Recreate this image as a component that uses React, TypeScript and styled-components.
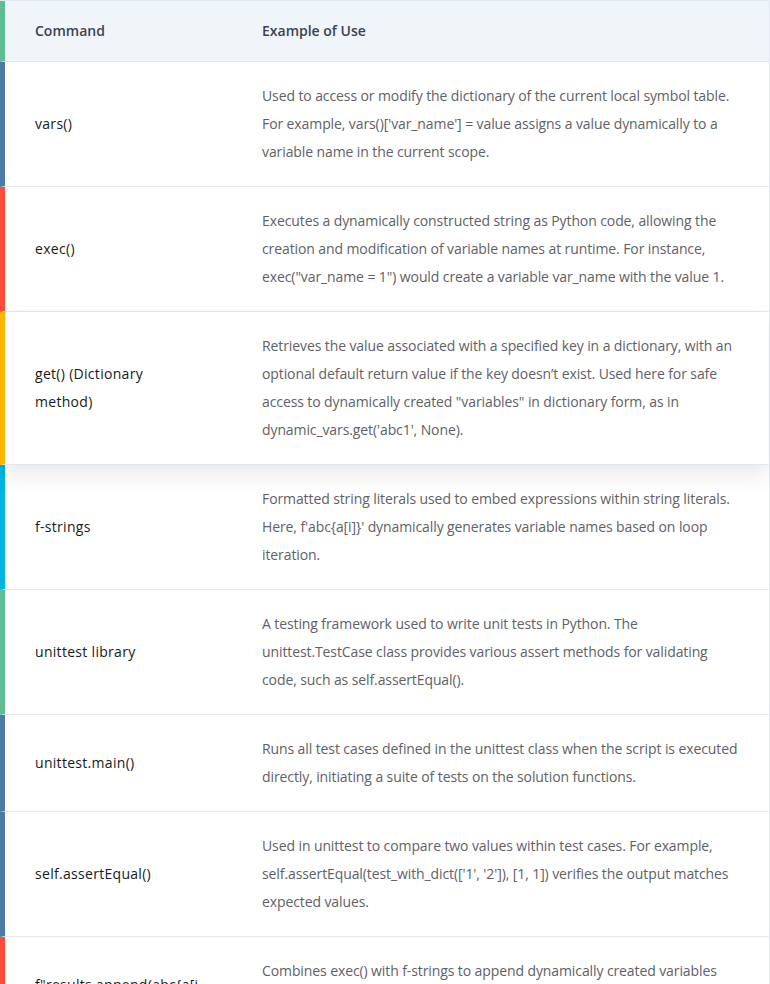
import React from "react";
import styled, { createGlobalStyle } from "styled-components";

const GlobalStyle = createGlobalStyle`
  html, body {
    margin: 0;
    padding: 0;
    background: #fff;
  }
  body {
    font-family: "Open Sans", Lato, sans-serif;
    -webkit-font-smoothing: antialiased;
  }
`;

type Row = {
  command: string;
  usage: string;
  accent: string;
  raised?: boolean;
};

const rows: Row[] = [
  {
    command: "vars()",
    usage:
      "Used to access or modify the dictionary of the current local symbol table. For example, vars()['var_name'] = value assigns a value dynamically to a variable name in the current scope.",
    accent: "#4a7aa5",
  },
  {
    command: "exec()",
    usage:
      'Executes a dynamically constructed string as Python code, allowing the creation and modification of variable names at runtime. For instance, exec("var_name = 1") would create a variable var_name with the value 1.',
    accent: "#ff4c3b",
  },
  {
    command: "get() (Dictionary method)",
    usage:
      "Retrieves the value associated with a specified key in a dictionary, with an optional default return value if the key doesn\u2019t exist. Used here for safe access to dynamically created \"variables\" in dictionary form, as in dynamic_vars.get('abc1', None).",
    accent: "#ffb500",
    raised: true,
  },
  {
    command: "f-strings",
    usage:
      "Formatted string literals used to embed expressions within string literals. Here, f'abc{a[i]}' dynamically generates variable names based on loop iteration.",
    accent: "#00b3e0",
  },
  {
    command: "unittest library",
    usage:
      "A testing framework used to write unit tests in Python. The unittest.TestCase class provides various assert methods for validating code, such as self.assertEqual().",
    accent: "#5fbd96",
  },
  {
    command: "unittest.main()",
    usage:
      "Runs all test cases defined in the unittest class when the script is executed directly, initiating a suite of tests on the solution functions.",
    accent: "#4a7aa5",
  },
  {
    command: "self.assertEqual()",
    usage:
      "Used in unittest to compare two values within test cases. For example, self.assertEqual(test_with_dict(['1', '2']), [1, 1]) verifies the output matches expected values.",
    accent: "#4a7aa5",
  },
  {
    command: 'f"results.append(abc{a[i]})"',
    usage:
      "Combines exec() with f-strings to append dynamically created variables into a results list, so that every generated value can be collected, inspected and compared against the expected output.",
    accent: "#ff4c3b",
  },
];

export default function App() {
  return (
    <>
      <GlobalStyle />
      <Table>
        <HeadRow>
          <HeadCell>Command</HeadCell>
          <HeadCell>Example of Use</HeadCell>
        </HeadRow>
        {rows.map((r) => (
          <BodyRow key={r.command} $accent={r.accent} $raised={r.raised}>
            <CommandCell>{r.command}</CommandCell>
            <UsageCell>{r.usage}</UsageCell>
          </BodyRow>
        ))}
      </Table>
    </>
  );
}

const Table = styled.div`
  width: 770px;
  box-sizing: border-box;
  border-top: 1px solid #e2e8f0;
  border-right: 1px solid #e2e8f0;
`;

const HeadRow = styled.div`
  display: grid;
  grid-template-columns: 227px 1fr;
  background: #f0f5fa;
  border-left: 5px solid #5fbd96;
  border-bottom: 1px solid #e2e8f0;
`;

const HeadCell = styled.div`
  padding: 16px 30px;
  font-size: 14px;
  line-height: 28px;
  font-weight: 600;
  color: #3b4250;
`;

const BodyRow = styled.div<{ $accent: string; $raised?: boolean }>`
  display: grid;
  grid-template-columns: 227px 1fr;
  align-items: center;
  background: #fff;
  border-left: 5px solid ${(p) => p.$accent};
  border-bottom: 1px solid #e2e8f0;
  position: relative;
  z-index: ${(p) => (p.$raised ? 1 : 0)};
  box-shadow: ${(p) => (p.$raised ? "0 10px 22px rgba(0, 0, 0, 0.09)" : "none")};
`;

const CommandCell = styled.div`
  padding: 20px 30px;
  font-size: 14px;
  line-height: 28px;
  font-weight: 500;
  letter-spacing: 0.3px;
  color: #161a22;
  overflow-wrap: anywhere;
`;

const UsageCell = styled.div`
  padding: 20px 30px;
  font-size: 14px;
  line-height: 28px;
  letter-spacing: -0.1px;
  color: #5f6166;
`;
